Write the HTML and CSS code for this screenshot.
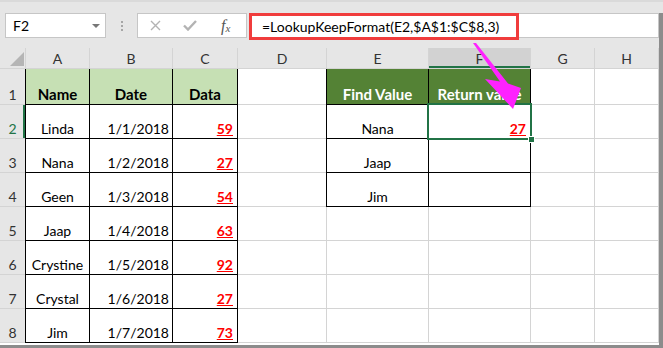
FILE: index.html
```html
<!DOCTYPE html>
<html lang="en">
<head>
    <meta charset="UTF-8">
    <meta name="viewport" content="width=device-width, initial-scale=1.0">
    <title>LookupKeepFormat</title>
    <link rel="stylesheet" href="styles.css">
</head>
<body>

    <div class="app">
        <!-- formula bar -->
        <div class="toolbar">
            <div class="namebox"><span>F2</span><span class="caret"></span></div>
            <div class="grip"><i></i><i></i><i></i></div>
            <div class="fbuttons">
                <svg class="ico-x" width="11" height="11" viewBox="0 0 11 11"><path d="M1 1L10 10M10 1L1 10" stroke="#b3b3b3" stroke-width="1.4" fill="none"/></svg>
                <svg class="ico-ok" width="14" height="11" viewBox="0 0 14 11"><path d="M1 5.5L5 9.5L13 1" stroke="#b3b3b3" stroke-width="2.4" fill="none"/></svg>
                <span class="fx">f<sub>x</sub></span>
            </div>
            <div class="formula">
                <div class="formula-text">=LookupKeepFormat(E2,$A$1:$C$8,3)</div>
                <div class="formula-rest"></div>
            </div>
        </div>

        <!-- sheet -->
        <div class="sheet-wrap">
            <div class="sheet">
                <div class="block block-a">
                    <div class="cell c head-light">Name</div>
                    <div class="cell c head-light">Date</div>
                    <div class="cell c head-light">Data</div>
                    <div class="cell c">Linda</div><div class="cell r">1/1/2018</div><div class="cell r val">59</div>
                    <div class="cell c">Nana</div><div class="cell r">1/2/2018</div><div class="cell r val">27</div>
                    <div class="cell c">Geen</div><div class="cell r">1/3/2018</div><div class="cell r val">54</div>
                    <div class="cell c">Jaap</div><div class="cell r">1/4/2018</div><div class="cell r val">63</div>
                    <div class="cell c">Crystine</div><div class="cell r">1/5/2018</div><div class="cell r val">92</div>
                    <div class="cell c">Crystal</div><div class="cell r">1/6/2018</div><div class="cell r val">27</div>
                    <div class="cell c">Jim</div><div class="cell r">1/7/2018</div><div class="cell r val">73</div>
                </div>
                <div class="block block-e">
                    <div class="cell c head-dark">Find Value</div>
                    <div class="cell c head-dark">Return value</div>
                    <div class="cell c">Nana</div><div class="cell r val selected">27</div>
                    <div class="cell c">Jaap</div><div class="cell"></div>
                    <div class="cell c">Jim</div><div class="cell"></div>
                </div>

                <div class="corner"><svg width="14" height="14" viewBox="0 0 14 14"><path d="M14 0V14H0Z" fill="#b5b5b5"/></svg></div>
                <div class="ch">A</div><div class="ch">B</div><div class="ch">C</div><div class="ch">D</div>
                <div class="ch">E</div><div class="ch sel">F</div><div class="ch">G</div><div class="ch">H</div>

                <div class="rh">1</div><div class="cell"></div><div class="cell"></div><div class="cell"></div>
                <div class="rh sel">2</div><div class="cell"></div><div class="cell"></div><div class="cell"></div>
                <div class="rh">3</div><div class="cell"></div><div class="cell"></div><div class="cell"></div>
                <div class="rh">4</div><div class="cell"></div><div class="cell"></div><div class="cell"></div>
                <div class="rh">5</div><div class="cell"></div><div class="cell"></div><div class="cell"></div><div class="cell"></div><div class="cell"></div>
                <div class="rh">6</div><div class="cell"></div><div class="cell"></div><div class="cell"></div><div class="cell"></div><div class="cell"></div>
                <div class="rh">7</div><div class="cell"></div><div class="cell"></div><div class="cell"></div><div class="cell"></div><div class="cell"></div>
                <div class="rh">8</div><div class="cell"></div><div class="cell"></div><div class="cell"></div><div class="cell"></div><div class="cell"></div>
            </div>
        </div>

        <!-- annotation arrow -->
        <svg class="arrow" width="663" height="348" viewBox="0 0 663 348">
            <polygon points="473,43 476,43 508,83.5 521,88 513,109 485,79 500,81.5" fill="#ff22ff"/>
        </svg>
    </div>

</body>
</html>
```

FILE: styles.css
```css
body {
    margin: 0;
    background: #fff;
    font-family: Lato, "Open Sans", sans-serif;
    font-size: 14px;
    color: #000;
}
.app {
    position: relative;
    width: 663px;
    height: 348px;
    overflow: hidden;
}
/* Formula bar */
.toolbar {
    height: 48px;
    box-sizing: border-box;
    background: #e6e6e6;
    border-top: 2px solid #dadada;
    padding-top: 11px;
    display: flex;
    align-items: flex-start;
}
.namebox {
    margin-left: 5px;
    width: 101px;
    height: 25px;
    box-sizing: border-box;
    border: 1px solid #c6c6c6;
    background: #fff;
    display: flex;
    align-items: center;
    justify-content: space-between;
    padding: 0 5px 0 7px;
}
.caret {
    width: 0;
    height: 0;
    border-left: 4px solid transparent;
    border-right: 4px solid transparent;
    border-top: 4px solid #777;
}
.grip {
    width: 31px;
    height: 25px;
    display: flex;
    flex-direction: column;
    align-items: center;
    justify-content: center;
    gap: 2px;
}
.grip i {
    width: 2px;
    height: 2px;
    background: #a6a6a6;
}
.fbuttons {
    width: 110px;
    height: 25px;
    box-sizing: border-box;
    border: 1px solid #c6c6c6;
    background: #fff;
    display: flex;
    align-items: center;
    padding-left: 12px;
}
.ico-ok {
    margin-left: 22px;
}
.fx {
    margin-left: 24px;
    font-family: "Liberation Serif", serif;
    font-style: italic;
    font-size: 16px;
    color: #555;
    line-height: 1;
}
.fx sub {
    font-size: 11px;
    vertical-align: -1px;
}
.formula {
    flex: 1;
    align-self: stretch;
    margin-left: 2px;
    display: flex;
    align-items: flex-start;
    border-right: 4px solid #8c8c8c;
}
.formula-text {
    width: 270px;
    height: 27px;
    box-sizing: border-box;
    border: 3px solid #f03c3c;
    background: #fff;
    padding-left: 10px;
    line-height: 21px;
    white-space: nowrap;
}
.formula-rest {
    flex: 1;
    height: 25px;
    box-sizing: border-box;
    background: #fff;
    border: 1px solid #c6c6c6;
    border-left: 0;
}
/* Sheet grid */
.sheet-wrap {
    width: fit-content;
    background: #fff;
    padding-bottom: 2px;
    border-right: 4px solid #8c8c8c;
    border-bottom: 3px solid #8c8c8c;
}
.sheet {
    display: grid;
    grid-template-columns: 25px 63px 82px 64px 88px 101px 101px 63px 63px;
    grid-template-rows: 20px 35px repeat(7, 33px);
    gap: 1px;
    background: #d4d4d4;
    border-right: 1px solid #d4d4d4;
    border-bottom: 1px solid #d4d4d4;
}
.corner {
    background: #e6e6e6;
    display: flex;
    align-items: flex-end;
    justify-content: flex-end;
    padding: 0 1px 2px 0;
}
.ch {
    background: #e6e6e6;
    display: flex;
    align-items: center;
    justify-content: center;
    color: #333;
}
.ch.sel {
    background: #d2d2d2;
    border-bottom: 2px solid #217346;
    padding-top: 2px;
}
.rh {
    background: #e6e6e6;
    display: flex;
    align-items: flex-end;
    justify-content: center;
    padding-bottom: 1px;
    color: #333;
}
.rh.sel {
    border-right: 2px solid #217346;
    padding-left: 2px;
    color: #217346;
}
.cell {
    background: #fff;
    display: flex;
    align-items: flex-end;
    padding: 0 3px 1px;
    white-space: nowrap;
}
.c {
    justify-content: center;
}
.r {
    justify-content: flex-end;
}
.val {
    color: #ff0000;
    font-weight: bold;
    text-decoration: underline;
    padding-right: 4px;
}
.head-light {
    background: #c6e0b4;
    font-weight: bold;
    font-size: 15px;
}
.head-dark {
    background: #548235;
    color: #fff;
    font-weight: bold;
    font-size: 15px;
}
/* bordered ranges */
.block {
    display: grid;
    gap: 1px;
    background: #000;
    border: 1px solid #000;
    border-top: 0;
    margin: 0 -1px -1px;
    z-index: 1;
}
.block-a {
    grid-column: 2 / 5;
    grid-row: 2 / 10;
    grid-template-columns: 63px 82px 64px;
    grid-template-rows: 35px repeat(7, 33px);
}
.block-e {
    grid-column: 6 / 8;
    grid-row: 2 / 6;
    grid-template-columns: 101px 101px;
    grid-template-rows: 35px repeat(3, 33px);
}
.selected {
    position: relative;
}
.selected::after {
    content: "";
    position: absolute;
    top: -2px;
    left: -2px;
    right: -2px;
    bottom: -2px;
    border: 2px solid #217346;
}
.selected::before {
    content: "";
    position: absolute;
    right: -5px;
    bottom: -5px;
    width: 5px;
    height: 5px;
    background: #217346;
    border: 1px solid #fff;
    z-index: 2;
}
.arrow {
    position: absolute;
    top: 0;
    left: 0;
    pointer-events: none;
    z-index: 5;
}
```
